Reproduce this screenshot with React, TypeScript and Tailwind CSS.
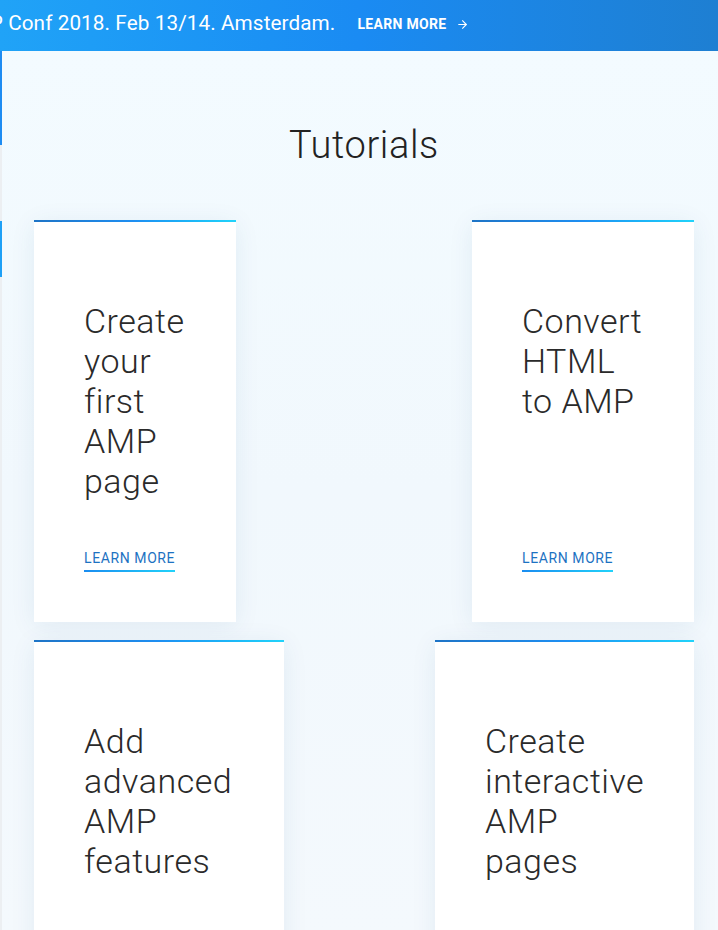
import { ArrowRight } from 'lucide-react';

const cards = [
  { title: ['Create', 'your', 'first', 'AMP', 'page'], w: 'w-[202px]', link: true },
  { title: ['Convert', 'HTML', 'to AMP'], w: 'w-[222px]', link: true },
  { title: ['Add', 'advanced', 'AMP', 'features'], w: 'w-[250px]', link: false },
  { title: ['Create', 'interactive', 'AMP', 'pages'], w: 'w-[259px]', link: false },
];

function Card({ title, w, link, tall }: { title: string[]; w: string; link: boolean; tall: boolean }) {
  return (
    <div className={`${w} ${tall ? 'h-[402px]' : 'h-[400px]'} flex flex-col bg-white shadow-[0_4px_24px_rgba(30,80,130,0.08)]`}>
      <div className="h-[2px] bg-gradient-to-r from-[#1e74c6] via-[#1e8ff2] to-[#22d3fa]" />
      <div className="flex flex-col flex-1 pl-[50px] pr-4 pt-[79px] pb-[50px]">
        <h3 className="text-[34px] leading-[40px] font-light text-[#2a2a2a] tracking-[0.5px]">
          {title.map((t, i) => (
            <div key={i}>{t}</div>
          ))}
        </h3>
        {link && (
          <a className="mt-auto self-start pb-[3px] text-[14px] leading-[18px] tracking-[0.6px] text-[#1d72c2] border-b-2 border-transparent [border-image:linear-gradient(to_right,#1a8cf0,#22d3fa)_1]">
            LEARN MORE
          </a>
        )}
      </div>
    </div>
  );
}

export default function App() {
  return (
    <div className="w-[718px] h-[930px] overflow-hidden bg-[#f3fbff] font-['Roboto','Liberation_Sans',sans-serif]">
      <div className="h-[51px] flex items-center pb-[3px] overflow-hidden bg-gradient-to-r from-[#20a3f7] via-[#1a8bf3] to-[#1e7fd2] text-white">
        <span className="-ml-[42px] whitespace-nowrap text-[20.7px] tracking-[0.1px]">AMP Conf 2018. Feb 13/14. Amsterdam.</span>
        <span className="ml-[22px] flex items-center gap-[10px] whitespace-nowrap text-[14px] font-bold tracking-[0.3px]">
          LEARN MORE
          <ArrowRight className="w-[13px] h-[13px]" strokeWidth={2} />
        </span>
      </div>
      <div className="flex h-[879px]">
        <aside className="w-[2px] flex flex-col shrink-0">
          <div className="h-[94px] bg-[#1e8cf2]" />
          <div className="h-[76px] bg-[#eceff2]" />
          <div className="h-[56px] bg-[#1ea0f6]" />
          <div className="flex-1 bg-[#eceff2]" />
        </aside>
        <main className="flex-1 pl-[32px] pr-[24px] bg-gradient-to-b from-[#f3fbff] via-[#f1f8fd] to-[#f4f9fd]">
          <h1 className="h-[169px] pt-[69px] text-center text-[38px] leading-[50px] font-light text-[#222] tracking-[0.6px]">Tutorials</h1>
          <div className="flex justify-between">
            <Card {...cards[0]} tall />
            <Card {...cards[1]} tall />
          </div>
          <div className="flex justify-between mt-[18px]">
            <Card {...cards[2]} tall={false} />
            <Card {...cards[3]} tall={false} />
          </div>
        </main>
      </div>
    </div>
  );
}
